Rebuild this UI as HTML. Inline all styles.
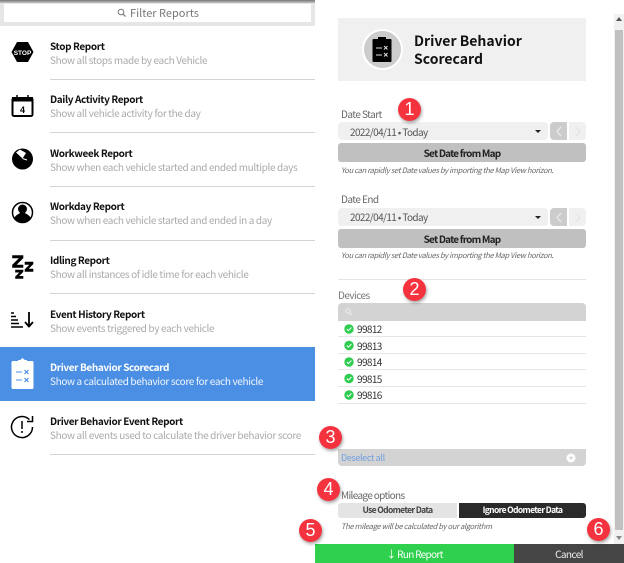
<!DOCTYPE html>
<html><head><meta charset="utf-8">
<style>
html,body{margin:0;padding:0;background:#fff;width:624px;height:563px;overflow:hidden}
body{font-family:"Noto Sans CJK JP","Liberation Sans",sans-serif;position:relative}
.a{position:absolute;white-space:nowrap}
.t{left:50px;font-size:10px;font-weight:700;color:#111;line-height:14px;height:14px;letter-spacing:-.38px}
.d{left:50px;font-size:10px;color:#aaa;line-height:14px;height:14px;letter-spacing:-.35px}
.s{position:absolute;left:50px;width:265px;height:1px;background:#d4d4d4}
.l{font-size:10px;color:#666;line-height:14px;letter-spacing:-.55px}
.dd{position:absolute;left:338px;width:210px;height:18px;background:#f0f0f0;border-radius:4px}
.v{left:350px;font-size:10px;color:#555;line-height:14px;letter-spacing:-.6px}
.pb{position:absolute;left:550px;width:17px;height:18px;background:#ccc;border-radius:4px 0 0 4px}
.nb{position:absolute;left:569px;width:17px;height:18px;background:#f0f0f0;border-radius:0 4px 4px 0}
.btn{position:absolute;left:338px;width:248px;height:19px;background:#c0c0c0;border-radius:3px;text-align:center;font-size:10px;font-weight:700;color:#222;line-height:19px;letter-spacing:-.8px}
.h{left:341px;font-size:7.5px;font-style:italic;color:#666;line-height:12px;letter-spacing:-.3px}
.r{position:absolute;left:338px;width:248px;height:1px;background:#e6e6e6}
.n{left:357px;font-size:10px;color:#333;line-height:14px;letter-spacing:-.6px}
.b{position:absolute;width:23px;height:23px;border-radius:50%;background:#f4333f;color:#fff;text-align:center;font-family:"Liberation Sans",sans-serif;font-size:18px;line-height:23px;box-shadow:1px 2px 3px rgba(0,0,0,.35)}
svg{position:absolute;overflow:visible}
</style></head><body>
<div class="a" style="left:0;top:0;width:315px;height:4px;background:linear-gradient(#777,#ddd)"></div>
<div class="a" style="left:0;top:3px;width:315px;height:23px;background:#e6e6e6"></div>
<div class="a" style="left:4px;top:4px;width:307px;height:18px;background:#fff"></div>
<div class="a" style="left:130px;top:4px;font-size:11px;color:#777;line-height:18px">Filter Reports</div>
<svg style="left:117px;top:8px" width="10" height="10" viewBox="0 0 10 10"><circle cx="4" cy="4" r="2.8" fill="none" stroke="#777" stroke-width="1"/><path d="M6 6l2.6 2.6" stroke="#777" stroke-width="1.2"/></svg>

<div class="a t" style="top:39px">Stop Report</div><div class="a d" style="top:53px">Show all stops made by each Vehicle</div><div class="s" style="top:79px"></div>
<div class="a t" style="top:92px">Daily Activity Report</div><div class="a d" style="top:106px">Show all vehicle activity for the day</div><div class="s" style="top:132px"></div>
<div class="a t" style="top:146px">Workweek Report</div><div class="a d" style="top:160px">Show when each vehicle started and ended multiple days</div><div class="s" style="top:186px"></div>
<div class="a t" style="top:199px">Workday Report</div><div class="a d" style="top:213px">Show when each vehicle started and ended in a day</div><div class="s" style="top:240px"></div>
<div class="a t" style="top:253px">Idling Report</div><div class="a d" style="top:267px">Show all instances of idle time for each vehicle</div><div class="s" style="top:293px"></div>
<div class="a t" style="top:307px">Event History Report</div><div class="a d" style="top:321px">Show events triggered by each vehicle</div>
<div class="a" style="left:0;top:347px;width:315px;height:54px;background:#4a8fe3"></div>
<div class="a t" style="top:360px;color:#fff">Driver Behavior Scorecard</div><div class="a d" style="top:374px;color:#f2f6fc">Show a calculated behavior score for each vehicle</div>
<div class="a t" style="top:414px">Driver Behavior Event Report</div><div class="a d" style="top:428px">Show all events used to calculate the driver behavior score</div><div class="s" style="top:454px"></div>

<svg style="left:0;top:0" width="50" height="450" viewBox="0 0 50 450">
<polygon points="17,42 28,42 33.500,52 28,62 17,62 11.500,52" fill="#000"/>
<text x="22.500" y="55" text-anchor="middle" font-family="Liberation Sans" font-size="6.500" font-weight="700" fill="#fff">STOP</text>
<rect x="12.500" y="98" width="20" height="18" rx="1.500" fill="#fff" stroke="#000" stroke-width="2"/>
<rect x="12" y="97" width="21" height="4.500" fill="#000"/>
<path d="M17 95v5M28 95v5" stroke="#000" stroke-width="1.500"/>
<text x="22.500" y="113" text-anchor="middle" font-family="Liberation Sans" font-size="9" font-weight="700" fill="#000">4</text>
<circle cx="22.500" cy="159" r="10.500" fill="#000"/>
<path d="M16 152.500L20 149.500 26 153 22.500 158.500z" fill="#fff"/><path d="M22.500 158.500l4.500 1.500" stroke="#fff" stroke-width="1" fill="none"/>
<circle cx="22.500" cy="212.500" r="10" fill="#fff" stroke="#000" stroke-width="1.500"/>
<circle cx="22.500" cy="209" r="4.500" fill="#000"/><path d="M14 219c1-4 5-5 6-6h5c1 1 5 2 6 6-4 4-13 4-17 0z" fill="#000"/><rect x="20" y="211" width="5" height="4" fill="#000"/>
<g stroke="#000" stroke-width=".6">
<path d="M12.500 255.500h10.500v2.500l-7 7h7v2.500h-10.500v-2.500l7-7h-7z" fill="#000"/>
<path d="M25 262h8v2l-5 5h5v2.500H25v-2l5-5h-5z" fill="#000"/>
<path d="M15.500 270h7.500v1.800l-4.500 4.500h4.500V278.500h-7.500v-1.800l4.500-4.500h-4.500z" fill="#000"/>
</g>
<path d="M11 313h3M11 316.500h5M11 320h7M11 323.500h8M11 327h12" stroke="#000" stroke-width="1.600"/>
<path d="M29 312v14M25 322l4 4.500 4-4.500" stroke="#000" stroke-width="1.800" fill="none"/>
<rect x="11.500" y="361" width="22" height="28" rx="1.500" fill="#fff"/>
<path d="M19 361l3.500-3 3.500 3z" fill="#fff"/><rect x="18" y="360" width="9" height="2.500" fill="#fff"/>
<path d="M16 372h6M16 380h6M24.500 370l4 4M28.500 370l-4 4M24.500 378l4 4M28.500 378l-4 4" stroke="#4a8fe3" stroke-width="1.100"/>
<path d="M32.500 427A10.500 10.500 0 1 1 29.400 419.600" fill="none" stroke="#000" stroke-width="1.500"/>
<path d="M32.500 416v5.500h-5.500" fill="none" stroke="#000" stroke-width="1.500"/>
<path d="M22 421v8M22 431v2" stroke="#000" stroke-width="1.500"/>
</svg>

<div class="a" style="left:338px;top:18px;width:248px;height:63px;background:#f0f0f0"></div>
<div class="a" style="left:362px;top:29px;width:37px;height:37px;border:2px solid #fff;border-radius:50%;background:#ccc"></div>
<svg style="left:372px;top:37px" width="20" height="25" viewBox="0 0 20 25">
<rect x="0.500" y="2" width="19" height="23" rx="1" fill="#000"/><rect x="6" y="0" width="8" height="3" fill="#000"/>
<path d="M4 11h6M4 18h6M12 9l3.500 3.500M15.500 9l-3.500 3.500M12 16l3.500 3.500M15.500 16l-3.500 3.500" stroke="#ddd" stroke-width="1"/></svg>
<div class="a" style="left:414px;top:32px;font-size:14px;font-weight:700;color:#111;line-height:18px">Driver Behavior<br>Scorecard</div>

<div class="a l" style="left:341px;top:107px">Date Start</div>
<div class="dd" style="top:122px"></div><div class="a v" style="top:125px">2022/04/11 • Today</div>
<svg style="left:535px;top:130px" width="6" height="3"><path d="M0 0h6L3 3z" fill="#222"/></svg>
<div class="pb" style="top:122px"></div><div class="nb" style="top:122px"></div>
<svg style="left:555px;top:126px" width="28" height="10"><path d="M6 1L2 5.500 6 10" fill="none" stroke="#eee" stroke-width="1.200"/><path d="M21 1l4 4.500-4 4.500" fill="none" stroke="#e4e4e4" stroke-width="1.200"/></svg>
<div class="btn" style="top:143px">Set Date from Map</div>
<div class="a h" style="top:165px">You can rapidly set Date values by importing the Map View horizon.</div>

<div class="a l" style="left:341px;top:192px">Date End</div>
<div class="dd" style="top:208px"></div><div class="a v" style="top:210px">2022/04/11 • Today</div>
<svg style="left:535px;top:216px" width="6" height="3"><path d="M0 0h6L3 3z" fill="#222"/></svg>
<div class="pb" style="top:208px"></div><div class="nb" style="top:208px"></div>
<svg style="left:555px;top:212px" width="28" height="10"><path d="M6 1L2 5.500 6 10" fill="none" stroke="#eee" stroke-width="1.200"/><path d="M21 1l4 4.500-4 4.500" fill="none" stroke="#e4e4e4" stroke-width="1.200"/></svg>
<div class="btn" style="top:229px">Set Date from Map</div>
<div class="a h" style="top:250px">You can rapidly set Date values by importing the Map View horizon.</div>

<div class="r" style="top:279px"></div>
<div class="a l" style="left:338px;top:288px;color:#777">Devices</div>
<div class="a" style="left:338px;top:303px;width:248px;height:18px;background:#d3d3d3;border-radius:4px 4px 0 0"></div>
<svg style="left:345px;top:308px" width="7" height="7"><circle cx="3" cy="3" r="2.200" fill="none" stroke="#eee"/><path d="M4.500 4.500L7 7" stroke="#eee"/></svg>

<div class="r" style="top:336px"></div><div class="r" style="top:353px"></div><div class="r" style="top:369px"></div><div class="r" style="top:386px"></div><div class="r" style="top:403px"></div>
<div class="a n" style="top:322px">99812</div><div class="a n" style="top:339px">99813</div><div class="a n" style="top:355px">99814</div><div class="a n" style="top:372px">99815</div><div class="a n" style="top:388px">99816</div>
<svg style="left:344px;top:324px" width="10" height="76" viewBox="0 0 10 76">
<g><circle cx="5" cy="5" r="4.700" fill="#2ecc4f"/><path d="M2.800 5l1.600 1.700 3-3.200" fill="none" stroke="#fff" stroke-width="1"/></g>
<g transform="translate(0,16.500)"><circle cx="5" cy="5" r="4.700" fill="#2ecc4f"/><path d="M2.800 5l1.600 1.700 3-3.200" fill="none" stroke="#fff" stroke-width="1"/></g>
<g transform="translate(0,33)"><circle cx="5" cy="5" r="4.700" fill="#2ecc4f"/><path d="M2.800 5l1.600 1.700 3-3.200" fill="none" stroke="#fff" stroke-width="1"/></g>
<g transform="translate(0,49.500)"><circle cx="5" cy="5" r="4.700" fill="#2ecc4f"/><path d="M2.800 5l1.600 1.700 3-3.200" fill="none" stroke="#fff" stroke-width="1"/></g>
<g transform="translate(0,66)"><circle cx="5" cy="5" r="4.700" fill="#2ecc4f"/><path d="M2.800 5l1.600 1.700 3-3.200" fill="none" stroke="#fff" stroke-width="1"/></g>
</svg>

<div class="a" style="left:338px;top:449px;width:248px;height:17px;background:#d3d3d3;border-radius:0 0 4px 4px"></div>
<div class="a" style="left:341px;top:451px;font-size:9px;color:#6f9fe0;line-height:14px;letter-spacing:-.35px">Deselect all</div>
<svg style="left:566px;top:453px" width="10" height="10"><circle cx="5" cy="5" r="4.500" fill="#fff"/><path d="M2.800 3.800h4.400L5 7z" fill="#d3d3d3"/></svg>

<div class="a l" style="left:341px;top:488px;letter-spacing:-.66px">Mileage options</div>
<div class="a" style="left:338px;top:503px;width:119px;height:15px;background:#e4e4e4;border-radius:3px 0 0 3px;text-align:center;font-size:8.500px;font-weight:700;color:#444;line-height:15px;letter-spacing:-.65px">Use Odometer Data</div>
<div class="a" style="left:459px;top:503px;width:127px;height:15px;background:#2a2a2a;border-radius:0 3px 3px 0;text-align:center;font-size:8.500px;font-weight:700;color:#fff;line-height:15px;letter-spacing:-.65px">Ignore Odometer Data</div>
<div class="a h" style="top:521px">The mileage will be calculated by our algorithm</div>

<div class="a" style="left:315px;top:544px;width:199px;height:19px;background:#2ed04e;text-align:center;font-size:10px;color:#fff;line-height:19px;letter-spacing:-.7px">↓ Run Report</div>
<div class="a" style="left:514px;top:544px;width:110px;height:19px;background:#454545;text-align:center;font-size:10px;color:#eee;line-height:19px;letter-spacing:-.6px">Cancel</div>

<div class="a" style="left:614px;top:14px;width:10px;height:530px;background:#f1f1f1"></div>
<div class="a" style="left:615px;top:30px;width:8px;height:500px;background:#c1c1c1"></div>
<svg style="left:616px;top:17px" width="6" height="4"><path d="M0 4h6L3 0z" fill="#555"/></svg>
<svg style="left:616px;top:536px" width="6" height="4"><path d="M0 0h6L3 4z" fill="#888"/></svg>

<div class="b" style="left:398px;top:98px">1</div>
<div class="b" style="left:403px;top:278px">2</div>
<div class="b" style="left:319px;top:426px">3</div>
<div class="b" style="left:317px;top:478px">4</div>
<div class="b" style="left:299px;top:519px">5</div>
<div class="b" style="left:587px;top:518px">6</div>
</body></html>
